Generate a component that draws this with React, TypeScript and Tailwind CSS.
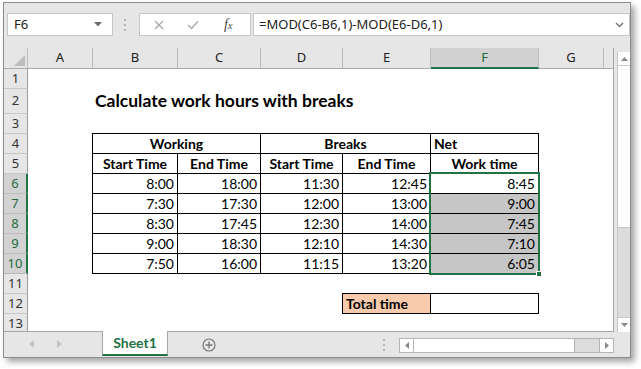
const data = [
  ['8:00', '18:00', '11:30', '12:45', '8:45'],
  ['7:30', '17:30', '12:00', '13:00', '9:00'],
  ['8:30', '17:45', '12:30', '14:00', '7:45'],
  ['9:00', '18:30', '12:10', '14:30', '7:10'],
  ['7:50', '16:00', '11:15', '13:20', '6:05'],
];

const cols = [
  { label: 'A', w: 'w-[65px]' },
  { label: 'B', w: 'w-[85px]' },
  { label: 'C', w: 'w-[83px]' },
  { label: 'D', w: 'w-[82px]' },
  { label: 'E', w: 'w-[88px]' },
  { label: 'F', w: 'w-[108px]' },
  { label: 'G', w: 'w-[65px]' },
];

function Toolbar() {
  return (
    <div className="flex h-[45px] items-start bg-[#e6e6e6] pt-[10px] font-['Noto_Sans',sans-serif] text-[13px]">
      {/* name box */}
      <div className="ml-[3px] flex h-[23px] w-[106px] items-center justify-between border border-[#c6c6c6] bg-white pl-[6px] pr-[10px]">
        <span className="text-[#222]">F6</span>
        <svg width="8" height="5" viewBox="0 0 8 5">
          <path d="M0 0 L8 0 L4 4.5 Z" fill="#6d6d6d" />
        </svg>
      </div>
      <div className="ml-[11px] flex h-[23px] flex-col justify-center gap-[3px]">
        <span className="h-[2px] w-[2px] bg-[#b4b4b4]" />
        <span className="h-[2px] w-[2px] bg-[#b4b4b4]" />
        <span className="h-[2px] w-[2px] bg-[#b4b4b4]" />
      </div>
      {/* cancel / enter / fx */}
      <div className="ml-[13px] flex h-[23px] w-[112px] items-center border border-[#c6c6c6] bg-white">
        <svg className="ml-[14px]" width="10" height="10" viewBox="0 0 10 10">
          <path d="M1 1 L9 9 M9 1 L1 9" stroke="#a8a8a8" strokeWidth="1.3" />
        </svg>
        <svg className="ml-[23px]" width="12" height="10" viewBox="0 0 12 10">
          <path d="M1 5 L4.5 8.5 L11 1.5" stroke="#a8a8a8" strokeWidth="1.4" fill="none" />
        </svg>
        <span className="ml-[25px] font-['Liberation_Serif',serif] text-[14px] italic text-[#444]">
          f<span className="text-[10px]">x</span>
        </span>
      </div>
      {/* formula */}
      <div className="ml-[2px] flex h-[23px] w-[377px] items-center justify-between border border-[#c6c6c6] bg-white pl-[5px] pr-[5px]">
        <span className="text-[#222]">=MOD(C6-B6,1)-MOD(E6-D6,1)</span>
        <svg width="9" height="6" viewBox="0 0 9 6">
          <path d="M1 1 L4.5 4.5 L8 1" stroke="#7a7a7a" strokeWidth="1.5" fill="none" />
        </svg>
      </div>
    </div>
  );
}

function ColumnHeader() {
  return (
    <div className="flex h-[21px] border-b border-[#ababab] bg-[#e6e6e6] font-['Noto_Sans',sans-serif] text-[13px]">
      <div className="flex w-[24px] items-end justify-end border-r border-[#bcbcbc] pb-[2px] pr-[2px]">
        <svg width="11" height="11" viewBox="0 0 11 11">
          <path d="M11 0 L11 11 L0 11 Z" fill="#bdbdbd" />
        </svg>
      </div>
      {cols.map((c) =>
        c.label === 'F' ? (
          <div
            key={c.label}
            className={`${c.w} -mb-px flex items-center justify-center border-r border-b-2 border-r-[#bcbcbc] border-b-[#217346] bg-[#d2d2d2] text-[#1e6b3f]`}
          >
            {c.label}
          </div>
        ) : (
          <div key={c.label} className={`${c.w} flex items-center justify-center border-r border-[#bcbcbc] text-[#222]`}>
            {c.label}
          </div>
        )
      )}
      <div className="flex-1" />
    </div>
  );
}

function RowHeaders() {
  const nums = [1, 2, 3, 4, 5, 6, 7, 8, 9, 10, 11, 12, 13];
  return (
    <div className="flex w-[24px] shrink-0 flex-col font-['Noto_Sans',sans-serif] text-[13px]">
      {nums.map((n) => {
        const sel = n >= 6 && n <= 10;
        const h = n === 2 ? 'h-[25px]' : 'h-[20px]';
        return sel ? (
          <div
            key={n}
            className={`${h} flex shrink-0 items-center justify-center border-b border-r-2 border-b-[#bcbcbc] border-r-[#217346] bg-[#d2d2d2] text-[#1e6b3f]`}
          >
            {n}
          </div>
        ) : (
          <div
            key={n}
            className={`${h} flex shrink-0 items-center justify-center border-b border-r border-b-[#c8c8c8] border-r-[#9b9b9b] bg-[#e6e6e6] text-[#333]`}
          >
            {n}
          </div>
        );
      })}
    </div>
  );
}

function DataTable() {
  const cell = 'flex h-[19px] items-center bg-white';
  return (
    <div className="relative ml-[64px] w-[447px]">
      <div className="grid grid-cols-[84px_82px_81px_87px_107px] gap-px bg-black p-px">
        <div className={`${cell} col-span-2 justify-center bg-[#bdd7ee] font-bold`}>Working</div>
        <div className={`${cell} col-span-2 justify-center bg-[#bdd7ee] font-bold`}>Breaks</div>
        <div className={`${cell} justify-start bg-[#bdd7ee] pl-[3px] font-bold`}>Net</div>
        {['Start Time', 'End Time', 'Start Time', 'End Time', 'Work time'].map((t, i) => (
          <div key={i} className={`${cell} justify-center font-bold`}>
            {t}
          </div>
        ))}
        {data.map((r, ri) =>
          r.map((v, ci) => (
            <div
              key={`${ri}-${ci}`}
              className={`flex h-[19px] items-center justify-end pr-[3px] ${
                ci === 4 && ri > 0 ? 'bg-[#c6c6c6]' : 'bg-white'
              }`}
            >
              {v}
            </div>
          ))
        )}
      </div>
      {/* selection F6:F10 */}
      <div className="pointer-events-none absolute left-[337px] top-[39px] h-[103px] w-[111px] border-2 border-[#217346]" />
      <div className="absolute left-[444px] top-[138px] h-[6px] w-[6px] border border-white bg-[#217346]" />
    </div>
  );
}

function Sheet() {
  return (
    <div className="flex h-[284px] w-[610px] flex-col overflow-hidden border-b border-r border-[#a6a6a6] bg-white">
      <ColumnHeader />
      <div className="flex min-h-0 flex-1 overflow-hidden">
        <RowHeaders />
        <div className="flex flex-1 flex-col font-['Lato',sans-serif] text-[14px] text-black">
          <div className="h-[20px] shrink-0" />
          <div className="flex h-[25px] shrink-0 items-center pl-[67px] text-[17.5px] font-bold">
            Calculate work hours with breaks
          </div>
          <div className="h-[19px] shrink-0" />
          <DataTable />
          <div className="h-[19px] shrink-0" />
          <div className="ml-[314px] grid w-[197px] grid-cols-[87px_107px] gap-px bg-black p-px">
            <div className="flex h-[19px] items-center bg-[#f8cbad] pl-[3px] font-bold">Total time</div>
            <div className="h-[19px] bg-white" />
          </div>
        </div>
      </div>
    </div>
  );
}

function VScroll() {
  return (
    <div className="flex w-[16px] flex-col bg-[#e6e6e6] pl-[3px] pt-[4px]">
      <div className="flex h-[280px] flex-col border-l border-[#c6c6c6] bg-[#dcdcdc]">
        <div className="flex h-[14px] items-center justify-center border-b border-[#c6c6c6] bg-white">
          <svg width="7" height="4" viewBox="0 0 7 4">
            <path d="M0 4 L7 4 L3.5 0 Z" fill="#8a8a8a" />
          </svg>
        </div>
        <div className="h-[162px] border-b border-[#c6c6c6] bg-white" />
        <div className="flex-1" />
        <div className="flex h-[15px] items-center justify-center border-t border-[#c6c6c6] bg-white">
          <svg width="7" height="4" viewBox="0 0 7 4">
            <path d="M0 0 L7 0 L3.5 4 Z" fill="#8a8a8a" />
          </svg>
        </div>
      </div>
    </div>
  );
}

function TabBar() {
  return (
    <div className="flex h-[25px] items-start bg-[#e6e6e6]">
      <svg className="ml-[25px] mt-[8px]" width="5" height="8" viewBox="0 0 5 8">
        <path d="M5 0 L5 8 L0 4 Z" fill="#c4c4c4" />
      </svg>
      <svg className="ml-[23px] mt-[8px]" width="5" height="8" viewBox="0 0 5 8">
        <path d="M0 0 L0 8 L5 4 Z" fill="#c4c4c4" />
      </svg>
      <div className="-mt-px ml-[40px] flex h-[25px] w-[66px] items-center justify-center border-x border-b-2 border-x-[#a6a6a6] border-b-[#217346] bg-white font-['Lato',sans-serif] text-[14px] font-bold text-[#217346]">
        Sheet1
      </div>
      <svg className="ml-[34px] mt-[6px]" width="14" height="14" viewBox="0 0 14 14">
        <circle cx="7" cy="7" r="6" stroke="#7a7a7a" strokeWidth="1.2" fill="none" />
        <path d="M7 3.5 L7 10.5 M3.5 7 L10.5 7" stroke="#7a7a7a" strokeWidth="1.4" />
      </svg>
      <div className="ml-[167px] mt-[7px] flex flex-col gap-[3px]">
        <span className="h-[2px] w-[2px] bg-[#b4b4b4]" />
        <span className="h-[2px] w-[2px] bg-[#b4b4b4]" />
        <span className="h-[2px] w-[2px] bg-[#b4b4b4]" />
      </div>
      <div className="ml-[14px] mt-[6px] flex h-[15px] w-[215px] border border-[#b4b4b4] bg-[#dcdcdc]">
        <div className="flex w-[14px] items-center justify-center border-r border-[#b4b4b4] bg-white">
          <svg width="4" height="7" viewBox="0 0 4 7">
            <path d="M4 0 L4 7 L0 3.5 Z" fill="#8a8a8a" />
          </svg>
        </div>
        <div className="w-[161px] border-r border-[#b4b4b4] bg-white" />
        <div className="flex-1" />
        <div className="flex w-[14px] items-center justify-center border-l border-[#b4b4b4] bg-white">
          <svg width="4" height="7" viewBox="0 0 4 7">
            <path d="M0 0 L0 7 L4 3.5 Z" fill="#8a8a8a" />
          </svg>
        </div>
      </div>
    </div>
  );
}

export default function App() {
  return (
    <div className="h-[369px] w-[641px] bg-white pl-[3px] pt-[2px]">
      <div className="flex h-[356px] w-[628px] flex-col border border-[#8c8c8c] bg-[#e6e6e6] shadow-[4px_4px_6px_rgba(0,0,0,0.35)]">
        <Toolbar />
        <div className="flex">
          <Sheet />
          <VScroll />
        </div>
        <TabBar />
      </div>
    </div>
  );
}
